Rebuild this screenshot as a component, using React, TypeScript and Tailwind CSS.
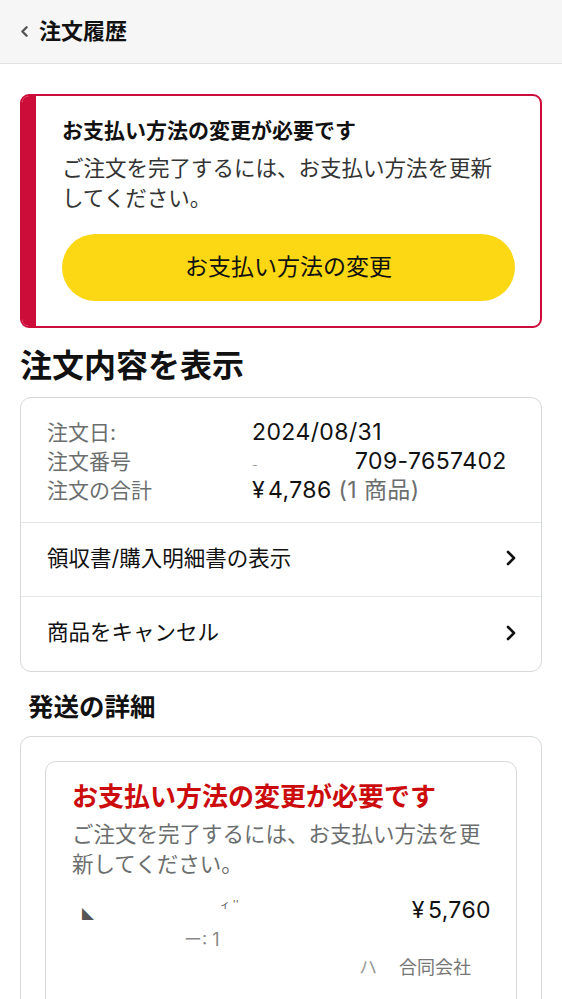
import React from 'react';
import { ChevronLeft, ChevronRight } from 'lucide-react';

const font = { fontFamily: 'Inter, "Noto Sans CJK JP", sans-serif' };

function InfoRow({ label, children }: { label: string; children: React.ReactNode }) {
  return (
    <div className="flex h-[29px] items-center">
      <span className="w-[205px] text-[21px] text-[#6b6e6e]">{label}</span>
      <span className="whitespace-nowrap text-[23px] tracking-[0.4px] text-[#111]">{children}</span>
    </div>
  );
}

function LinkRow({ label, last }: { label: string; last?: boolean }) {
  return (
    <div className={`flex h-[74px] items-center justify-between pl-[26px] pr-[18px] pb-[3px] ${last ? '' : 'border-b border-[#e3e6e6]'}`}>
      <span className="text-[21.5px] text-[#111]">{label}</span>
      <ChevronRight className="h-6 w-6 text-[#111]" strokeWidth={2.6} />
    </div>
  );
}

export default function App() {
  return (
    <div className="min-h-[999px] w-[562px] overflow-hidden bg-white" style={font}>
      {/* ヘッダー */}
      <div className="flex h-[64px] items-center gap-[6px] border-b border-[#e3e3e3] bg-[#f6f6f6] pl-[16px]">
        <ChevronLeft className="h-[17px] w-[17px] text-[#555]" strokeWidth={3.4} />
        <span className="text-[22px] font-bold text-[#111]">注文履歴</span>
      </div>

      <div className="px-[20px] pt-[30px]">
        {/* 警告 */}
        <div className="flex overflow-hidden rounded-[9px] border-2 border-[#cc0c39]">
          <div className="w-[14px] shrink-0 bg-[#cc0c39]" />
          <div className="flex-1 pl-[26px] pr-[25px] pt-[21px] pb-[25px]">
            <div className="text-[21px] font-bold leading-[28px] text-[#111]">お支払い方法の変更が必要です</div>
            <div className="mt-[8px] pr-[14px] text-[21.5px] leading-[30px] text-[#333]">
              ご注文を完了するには、お支払い方法を更新してください。
            </div>
            <button className="mt-[21px] flex h-[67px] w-full items-center justify-center rounded-full bg-[#fcd714] text-[23px] text-[#111]">
              お支払い方法の変更
            </button>
          </div>
        </div>

        <h2 className="mt-[18px] text-[32px] font-bold leading-[40px] text-[#111]">注文内容を表示</h2>

        <div className="mt-[11px] rounded-[11px] border border-[#d5d9d9]">
          <div className="border-b border-[#e3e6e6] pl-[26px] pt-[20px] pb-[17px]">
            <InfoRow label="注文日:">2024/08/31</InfoRow>
            <InfoRow label="注文番号">
              <span className="text-[12px] text-[#999]">-</span>
              <span className="ml-[97px]">709-7657402</span>
            </InfoRow>
            <InfoRow label="注文の合計">
              ¥<span className="ml-[3px]">4,786</span> <span className="text-[#6b6e6e]">(1 商品)</span>
            </InfoRow>
          </div>
          <LinkRow label="領収書/購入明細書の表示" />
          <LinkRow label="商品をキャンセル" last />
        </div>

        <h2 className="mt-[17px] pl-[8px] text-[25.5px] font-bold leading-[36px] text-[#111]">発送の詳細</h2>

        <div className="mt-[11px] h-[300px] rounded-[11px] border border-[#d5d9d9] px-[24px] pt-[24px]">
          <div className="h-[300px] rounded-[11px] border border-[#d5d9d9] pl-[26px] pr-[25px] pt-[16px]">
            <div className="text-[26px] font-bold leading-[38px] text-[#cc0c0c]">お支払い方法の変更が必要です</div>
            <div className="mt-[3px] text-[21.5px] leading-[30px] text-[#6b6e6e]">
              ご注文を完了するには、お支払い方法を更新してください。
            </div>
            <div className="mt-[16px] flex items-start justify-between">
              <div className="flex flex-col pl-[10px] pt-[4px] text-[#555]">
                <span className="ml-[138px] h-[10px] text-[10px] leading-[10px]">ィ ''</span>
                <span className="h-[12px] text-[12px] leading-[12px]">◣</span>
              </div>
              <span className="text-[23px] leading-[30px] tracking-[0.4px] text-[#111]">
                ¥<span className="ml-[3px]">5,760</span>
              </span>
            </div>
            <div className="ml-[112px] mt-[2px] text-[18px] leading-[26px] text-[#888]">ー: 1</div>
            <div className="mt-[2px] flex justify-end pr-[20px] text-[18px] leading-[26px] text-[#777]">
              <span className="mr-[22px] text-[#999]">ハ</span>
              <span>合同会社</span>
            </div>
          </div>
        </div>
      </div>
    </div>
  );
}
